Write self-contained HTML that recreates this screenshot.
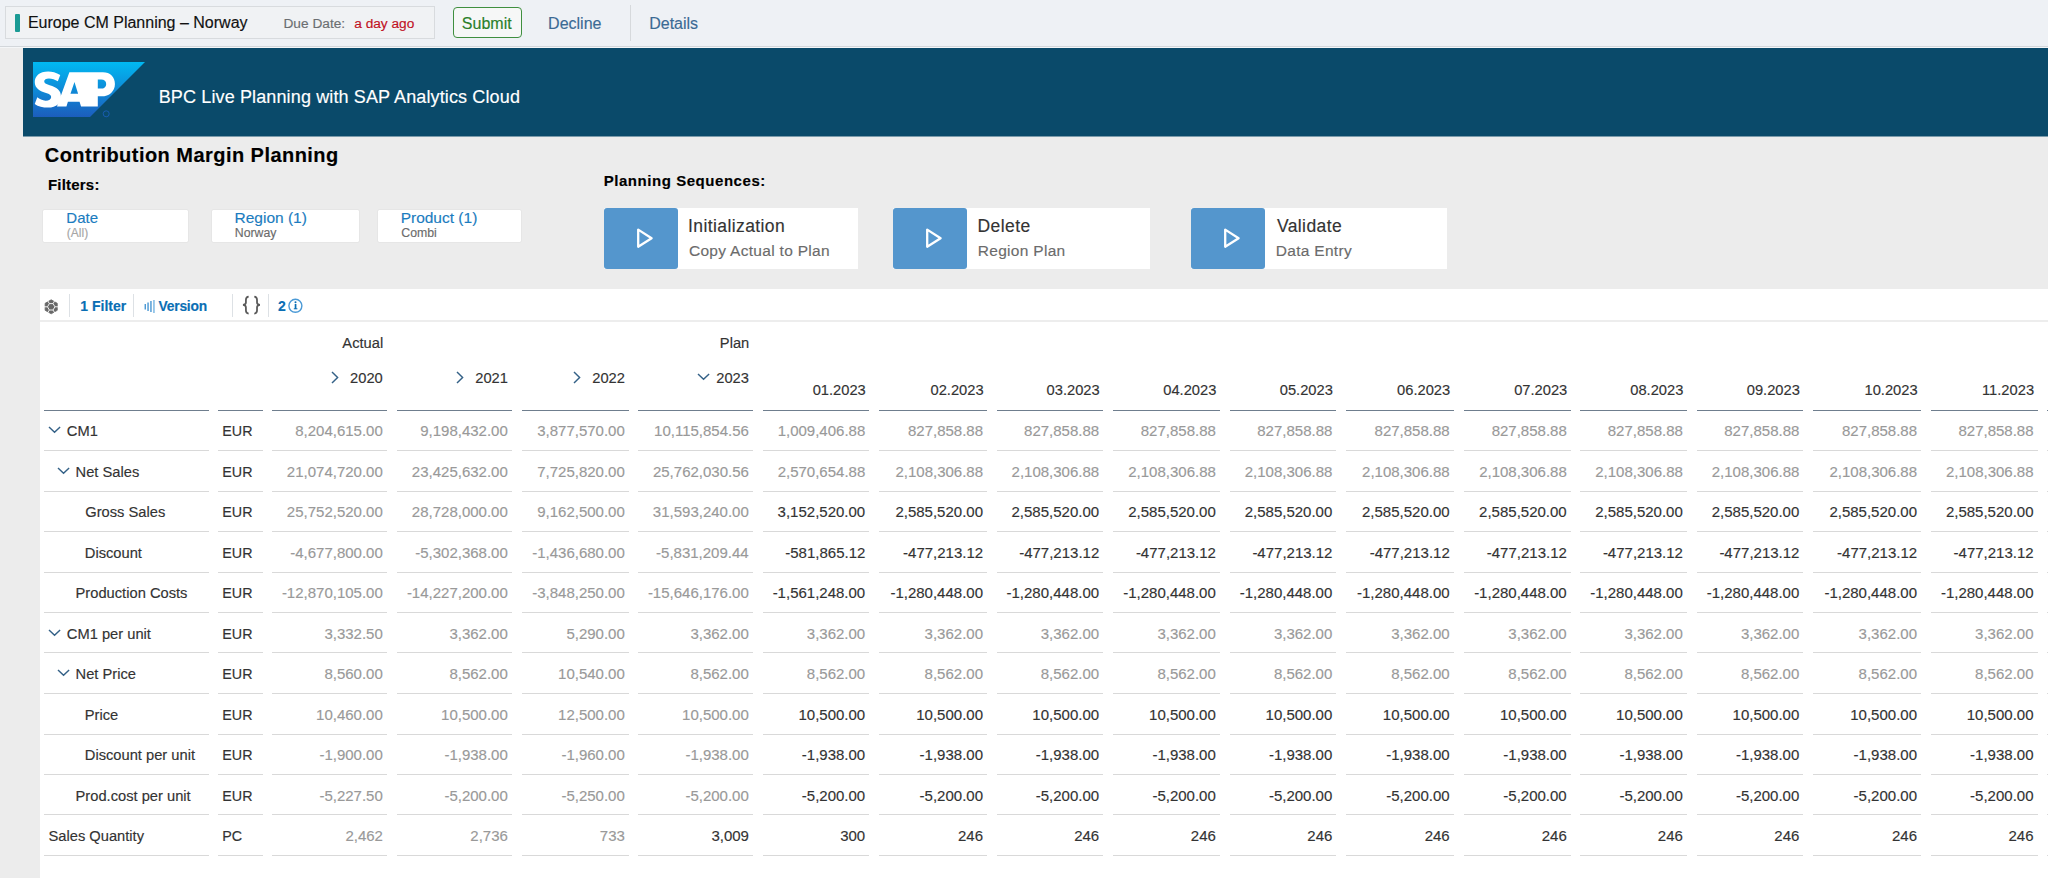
<!DOCTYPE html>
<html><head><meta charset="utf-8"><style>
html,body{margin:0;padding:0;}
body{width:2048px;height:878px;overflow:hidden;position:relative;background:#ececec;font-family:"Liberation Sans", sans-serif;}
.t{position:absolute;white-space:nowrap;line-height:1;-webkit-text-stroke:0.15px currentColor;}
</style></head><body>
<div style="position:absolute;left:0px;top:0px;width:2048px;height:46px;background:#eef1f5"></div>
<div style="position:absolute;left:0px;top:46px;width:2048px;height:1px;background:#d3d7db"></div>
<div style="position:absolute;left:0px;top:47px;width:2048px;height:1px;background:#f4f6f8"></div>
<div style="position:absolute;left:5px;top:6px;width:430px;height:33px;background:#f0f2f4;border:1px solid #d8dbde;box-sizing:border-box"></div>
<div style="position:absolute;left:15px;top:14px;width:4.5px;height:18px;background:#1a9a94;border-radius:1px"></div>
<div class="t" style="left:27.89px;top:15px;font-size:16px;color:#111;">Europe CM Planning – Norway</div>
<div class="t" style="left:283.48px;top:17px;font-size:13.7px;color:#6b6e71;">Due Date:</div>
<div class="t" style="left:354.22px;top:17px;font-size:13.7px;color:#c0111f;">a day ago</div>
<div style="position:absolute;left:453px;top:7px;width:69px;height:30.5px;background:#f6f7f7;border:1px solid #3f8f3f;border-radius:4px;box-sizing:border-box"></div>
<div class="t" style="left:461.87px;top:16px;font-size:16px;color:#2b7f2b;">Submit</div>
<div class="t" style="left:548.09px;top:16px;font-size:16px;color:#3b6a94;">Decline</div>
<div style="position:absolute;left:630px;top:5px;width:1px;height:36px;background:#d6d9dc"></div>
<div class="t" style="left:649.19px;top:16px;font-size:16px;color:#3b6a94;">Details</div>
<svg style="position:absolute;left:0;top:0" width="2048" height="140">
<defs><linearGradient id="g" x1="0" y1="0" x2="0" y2="1"><stop offset="0" stop-color="#00b9f2"/><stop offset="1" stop-color="#1c5dbd"/></linearGradient></defs>
<rect x="23" y="48" width="2025" height="88.5" fill="#0a4a6a"/>
<polygon points="33,62 145,62 90,117 33,117" fill="url(#g)"/>
<g transform="translate(30,58) scale(0.0729)" fill="#fff" fill-rule="evenodd">
<path d="M415,232 C360,200 300,185 250,185 C130,185 65,250 65,330 C65,420 140,455 220,480 C270,495 290,510 290,535 C290,565 260,585 215,585 C170,585 130,565 100,540 L65,630 C110,665 180,680 245,680 C370,680 425,610 425,530 C425,440 365,405 270,375 C215,358 195,345 195,320 C195,295 220,280 260,280 C300,280 345,295 382,318 Z"/>
<path d="M540,195 L1000,195 C1100,195 1165,260 1165,355 C1165,455 1090,525 980,525 L930,525 L930,665 L700,665 L680,600 L520,600 L500,665 L370,665 Z M555,490 L610,330 L660,490 Z M930,295 L975,295 C1020,295 1045,320 1045,355 C1045,395 1015,420 975,420 L930,420 Z"/>
</g>
<circle cx="106.2" cy="113.8" r="3" fill="none" stroke="#1a5fb8" stroke-width="0.9"/>
</svg>
<div class="t" style="left:158.72px;top:88px;font-size:18px;color:#fff;letter-spacing:0.13px;">BPC Live Planning with SAP Analytics Cloud</div>
<div class="t" style="left:44.78px;top:145px;font-size:20px;color:#000;font-weight:bold;letter-spacing:0.46px;">Contribution Margin Planning</div>
<div class="t" style="left:48.00px;top:177px;font-size:15px;color:#000;font-weight:bold;letter-spacing:0.2px;">Filters:</div>
<div style="position:absolute;left:43.4px;top:210px;width:144.29999999999998px;height:32px;background:#fff;box-shadow:0 0 1px rgba(0,0,0,0.25);border-radius:1px"></div>
<div class="t" style="left:66.37px;top:210px;font-size:15px;color:#1b7cc0;">Date</div>
<div class="t" style="left:66.86px;top:227px;font-size:12px;color:#a6a6a6;">(All)</div>
<div style="position:absolute;left:211.6px;top:210px;width:147.4px;height:32px;background:#fff;box-shadow:0 0 1px rgba(0,0,0,0.25);border-radius:1px"></div>
<div class="t" style="left:234.53px;top:210px;font-size:15.5px;color:#1b7cc0;">Region (1)</div>
<div class="t" style="left:234.79px;top:227px;font-size:12.3px;color:#6b6b6b;">Norway</div>
<div style="position:absolute;left:377.7px;top:210px;width:143.40000000000003px;height:32px;background:#fff;box-shadow:0 0 1px rgba(0,0,0,0.25);border-radius:1px"></div>
<div class="t" style="left:400.63px;top:210px;font-size:15.5px;color:#1b7cc0;">Product (1)</div>
<div class="t" style="left:401.28px;top:227px;font-size:12.3px;color:#6b6b6b;">Combi</div>
<div class="t" style="left:603.70px;top:173px;font-size:15px;color:#000;font-weight:bold;letter-spacing:0.55px;">Planning Sequences:</div>
<div style="position:absolute;left:603.7px;top:208px;width:254.29999999999995px;height:60.5px;background:#fff"></div>
<div style="position:absolute;left:603.7px;top:208px;width:74px;height:60.5px;background:#5496cd;border-radius:3px"></div>
<svg style="position:absolute;left:633.7px;top:224.5px" width="26" height="26"><polygon points="4.2,4.6 4.2,21.8 17.6,13.2" fill="none" stroke="#fff" stroke-width="2.3" stroke-linejoin="round"/></svg>
<div class="t" style="left:688.09px;top:218px;font-size:17.5px;color:#333;letter-spacing:0.4px;">Initialization</div>
<div class="t" style="left:688.91px;top:243px;font-size:15.5px;color:#6b6b6b;letter-spacing:0.3px;">Copy Actual to Plan</div>
<div style="position:absolute;left:893px;top:208px;width:257px;height:60.5px;background:#fff"></div>
<div style="position:absolute;left:893px;top:208px;width:74px;height:60.5px;background:#5496cd;border-radius:3px"></div>
<svg style="position:absolute;left:923px;top:224.5px" width="26" height="26"><polygon points="4.2,4.6 4.2,21.8 17.6,13.2" fill="none" stroke="#fff" stroke-width="2.3" stroke-linejoin="round"/></svg>
<div class="t" style="left:977.56px;top:218px;font-size:17.5px;color:#333;letter-spacing:0.4px;">Delete</div>
<div class="t" style="left:977.73px;top:243px;font-size:15.5px;color:#6b6b6b;letter-spacing:0.3px;">Region Plan</div>
<div style="position:absolute;left:1191px;top:208px;width:256px;height:60.5px;background:#fff"></div>
<div style="position:absolute;left:1191px;top:208px;width:74px;height:60.5px;background:#5496cd;border-radius:3px"></div>
<svg style="position:absolute;left:1221px;top:224.5px" width="26" height="26"><polygon points="4.2,4.6 4.2,21.8 17.6,13.2" fill="none" stroke="#fff" stroke-width="2.3" stroke-linejoin="round"/></svg>
<div class="t" style="left:1276.92px;top:218px;font-size:17.5px;color:#333;letter-spacing:0.4px;">Validate</div>
<div class="t" style="left:1275.73px;top:243px;font-size:15.5px;color:#6b6b6b;letter-spacing:0.3px;">Data Entry</div>
<div style="position:absolute;left:40px;top:289px;width:2008px;height:589px;background:#fff"></div>
<div style="position:absolute;left:40px;top:320px;width:2008px;height:1.5px;background:#ededed"></div>
<svg style="position:absolute;left:0;top:0" width="80" height="330">
<polygon points="51.20,299.80 57.26,303.30 57.26,310.30 51.20,313.80 45.14,310.30 45.14,303.30" fill="#686868" stroke="#686868" stroke-width="0.8" stroke-linejoin="round"/>
<g stroke="#fff" stroke-width="0.9" fill="none"><polygon points="54.90,306.80 53.05,310.00 49.35,310.00 47.50,306.80 49.35,303.60 53.05,303.60"/><line x1="54.90" y1="306.80" x2="59.20" y2="306.80"/><line x1="53.05" y1="310.00" x2="55.20" y2="313.73"/><line x1="49.35" y1="310.00" x2="47.20" y2="313.73"/><line x1="47.50" y1="306.80" x2="43.20" y2="306.80"/><line x1="49.35" y1="303.60" x2="47.20" y2="299.87"/><line x1="53.05" y1="303.60" x2="55.20" y2="299.87"/></g>
</svg>
<div style="position:absolute;left:68.5px;top:294px;width:1.2px;height:22.5px;background:#dde1e5"></div>
<div class="t" style="left:80.32px;top:299px;font-size:14px;color:#0a6eb4;font-weight:bold;">1 Filter</div>
<div style="position:absolute;left:133.2px;top:294px;width:1.2px;height:22.5px;background:#dde1e5"></div>
<svg style="position:absolute;left:144px;top:299px" width="12" height="15"><g fill="#3a8fd0">
<rect x="0.6" y="5" width="1.3" height="5.5"/><rect x="3.4" y="3.5" width="1.3" height="8.5"/><rect x="6.3" y="2" width="1.3" height="11"/><rect x="9.3" y="1" width="1.3" height="13" fill="#6aaee0"/></g></svg>
<div class="t" style="left:158.51px;top:300px;font-size:13.8px;color:#0a6eb4;font-weight:bold;letter-spacing:-0.2px;">Version</div>
<div style="position:absolute;left:232px;top:294px;width:1.2px;height:22.5px;background:#dde1e5"></div>
<svg style="position:absolute;left:236px;top:292px" width="30" height="28"><g transform="scale(0.03418)" fill="none" stroke="#5a5a5a" stroke-width="52">
<path d="M370,135 C310,140 290,170 290,230 L290,310 C290,350 260,375 205,380 C260,385 290,410 290,450 L290,540 C290,600 310,625 370,630"/>
<path d="M535,135 C595,140 615,170 615,230 L615,310 C615,350 645,375 700,380 C645,385 615,410 615,450 L615,540 C615,600 595,625 535,630"/>
</g></svg>
<div style="position:absolute;left:268.2px;top:294px;width:1.2px;height:22.5px;background:#dde1e5"></div>
<div class="t" style="left:277.91px;top:299px;font-size:14px;color:#0a6eb4;font-weight:bold;">2</div>
<svg style="position:absolute;left:288px;top:297.5px" width="15" height="15"><circle cx="7.4" cy="7.8" r="6.5" fill="none" stroke="#4b9ad6" stroke-width="1.4"/>
<rect x="6.7" y="6" width="1.7" height="5" fill="#0a6eb4"/><rect x="5.8" y="10.3" width="3.6" height="1" fill="#0a6eb4"/><circle cx="7.5" cy="4.2" r="1" fill="#0a6eb4"/></svg>
<div style="position:absolute;left:44px;top:410px;width:165px;height:1px;background:#6f7e8e"></div>
<div style="position:absolute;left:44px;top:450.0px;width:165px;height:1px;background:#d9d9d9"></div>
<div style="position:absolute;left:44px;top:491.0px;width:165px;height:1px;background:#d9d9d9"></div>
<div style="position:absolute;left:44px;top:531.0px;width:165px;height:1px;background:#d9d9d9"></div>
<div style="position:absolute;left:44px;top:572.0px;width:165px;height:1px;background:#d9d9d9"></div>
<div style="position:absolute;left:44px;top:612.0px;width:165px;height:1px;background:#d9d9d9"></div>
<div style="position:absolute;left:44px;top:652.0px;width:165px;height:1px;background:#d9d9d9"></div>
<div style="position:absolute;left:44px;top:693.0px;width:165px;height:1px;background:#d9d9d9"></div>
<div style="position:absolute;left:44px;top:734.0px;width:165px;height:1px;background:#d9d9d9"></div>
<div style="position:absolute;left:44px;top:773.5px;width:165px;height:1px;background:#d9d9d9"></div>
<div style="position:absolute;left:44px;top:814.0px;width:165px;height:1px;background:#d9d9d9"></div>
<div style="position:absolute;left:44px;top:855.0px;width:165px;height:1px;background:#d9d9d9"></div>
<div style="position:absolute;left:218px;top:410px;width:44.5px;height:1px;background:#6f7e8e"></div>
<div style="position:absolute;left:218px;top:450.0px;width:44.5px;height:1px;background:#d9d9d9"></div>
<div style="position:absolute;left:218px;top:491.0px;width:44.5px;height:1px;background:#d9d9d9"></div>
<div style="position:absolute;left:218px;top:531.0px;width:44.5px;height:1px;background:#d9d9d9"></div>
<div style="position:absolute;left:218px;top:572.0px;width:44.5px;height:1px;background:#d9d9d9"></div>
<div style="position:absolute;left:218px;top:612.0px;width:44.5px;height:1px;background:#d9d9d9"></div>
<div style="position:absolute;left:218px;top:652.0px;width:44.5px;height:1px;background:#d9d9d9"></div>
<div style="position:absolute;left:218px;top:693.0px;width:44.5px;height:1px;background:#d9d9d9"></div>
<div style="position:absolute;left:218px;top:734.0px;width:44.5px;height:1px;background:#d9d9d9"></div>
<div style="position:absolute;left:218px;top:773.5px;width:44.5px;height:1px;background:#d9d9d9"></div>
<div style="position:absolute;left:218px;top:814.0px;width:44.5px;height:1px;background:#d9d9d9"></div>
<div style="position:absolute;left:218px;top:855.0px;width:44.5px;height:1px;background:#d9d9d9"></div>
<div style="position:absolute;left:272px;top:410px;width:115px;height:1px;background:#6f7e8e"></div>
<div style="position:absolute;left:272px;top:450.0px;width:115px;height:1px;background:#d9d9d9"></div>
<div style="position:absolute;left:272px;top:491.0px;width:115px;height:1px;background:#d9d9d9"></div>
<div style="position:absolute;left:272px;top:531.0px;width:115px;height:1px;background:#d9d9d9"></div>
<div style="position:absolute;left:272px;top:572.0px;width:115px;height:1px;background:#d9d9d9"></div>
<div style="position:absolute;left:272px;top:612.0px;width:115px;height:1px;background:#d9d9d9"></div>
<div style="position:absolute;left:272px;top:652.0px;width:115px;height:1px;background:#d9d9d9"></div>
<div style="position:absolute;left:272px;top:693.0px;width:115px;height:1px;background:#d9d9d9"></div>
<div style="position:absolute;left:272px;top:734.0px;width:115px;height:1px;background:#d9d9d9"></div>
<div style="position:absolute;left:272px;top:773.5px;width:115px;height:1px;background:#d9d9d9"></div>
<div style="position:absolute;left:272px;top:814.0px;width:115px;height:1px;background:#d9d9d9"></div>
<div style="position:absolute;left:272px;top:855.0px;width:115px;height:1px;background:#d9d9d9"></div>
<div style="position:absolute;left:397px;top:410px;width:115px;height:1px;background:#6f7e8e"></div>
<div style="position:absolute;left:397px;top:450.0px;width:115px;height:1px;background:#d9d9d9"></div>
<div style="position:absolute;left:397px;top:491.0px;width:115px;height:1px;background:#d9d9d9"></div>
<div style="position:absolute;left:397px;top:531.0px;width:115px;height:1px;background:#d9d9d9"></div>
<div style="position:absolute;left:397px;top:572.0px;width:115px;height:1px;background:#d9d9d9"></div>
<div style="position:absolute;left:397px;top:612.0px;width:115px;height:1px;background:#d9d9d9"></div>
<div style="position:absolute;left:397px;top:652.0px;width:115px;height:1px;background:#d9d9d9"></div>
<div style="position:absolute;left:397px;top:693.0px;width:115px;height:1px;background:#d9d9d9"></div>
<div style="position:absolute;left:397px;top:734.0px;width:115px;height:1px;background:#d9d9d9"></div>
<div style="position:absolute;left:397px;top:773.5px;width:115px;height:1px;background:#d9d9d9"></div>
<div style="position:absolute;left:397px;top:814.0px;width:115px;height:1px;background:#d9d9d9"></div>
<div style="position:absolute;left:397px;top:855.0px;width:115px;height:1px;background:#d9d9d9"></div>
<div style="position:absolute;left:522px;top:410px;width:107px;height:1px;background:#6f7e8e"></div>
<div style="position:absolute;left:522px;top:450.0px;width:107px;height:1px;background:#d9d9d9"></div>
<div style="position:absolute;left:522px;top:491.0px;width:107px;height:1px;background:#d9d9d9"></div>
<div style="position:absolute;left:522px;top:531.0px;width:107px;height:1px;background:#d9d9d9"></div>
<div style="position:absolute;left:522px;top:572.0px;width:107px;height:1px;background:#d9d9d9"></div>
<div style="position:absolute;left:522px;top:612.0px;width:107px;height:1px;background:#d9d9d9"></div>
<div style="position:absolute;left:522px;top:652.0px;width:107px;height:1px;background:#d9d9d9"></div>
<div style="position:absolute;left:522px;top:693.0px;width:107px;height:1px;background:#d9d9d9"></div>
<div style="position:absolute;left:522px;top:734.0px;width:107px;height:1px;background:#d9d9d9"></div>
<div style="position:absolute;left:522px;top:773.5px;width:107px;height:1px;background:#d9d9d9"></div>
<div style="position:absolute;left:522px;top:814.0px;width:107px;height:1px;background:#d9d9d9"></div>
<div style="position:absolute;left:522px;top:855.0px;width:107px;height:1px;background:#d9d9d9"></div>
<div style="position:absolute;left:638px;top:410px;width:115px;height:1px;background:#6f7e8e"></div>
<div style="position:absolute;left:638px;top:450.0px;width:115px;height:1px;background:#d9d9d9"></div>
<div style="position:absolute;left:638px;top:491.0px;width:115px;height:1px;background:#d9d9d9"></div>
<div style="position:absolute;left:638px;top:531.0px;width:115px;height:1px;background:#d9d9d9"></div>
<div style="position:absolute;left:638px;top:572.0px;width:115px;height:1px;background:#d9d9d9"></div>
<div style="position:absolute;left:638px;top:612.0px;width:115px;height:1px;background:#d9d9d9"></div>
<div style="position:absolute;left:638px;top:652.0px;width:115px;height:1px;background:#d9d9d9"></div>
<div style="position:absolute;left:638px;top:693.0px;width:115px;height:1px;background:#d9d9d9"></div>
<div style="position:absolute;left:638px;top:734.0px;width:115px;height:1px;background:#d9d9d9"></div>
<div style="position:absolute;left:638px;top:773.5px;width:115px;height:1px;background:#d9d9d9"></div>
<div style="position:absolute;left:638px;top:814.0px;width:115px;height:1px;background:#d9d9d9"></div>
<div style="position:absolute;left:638px;top:855.0px;width:115px;height:1px;background:#d9d9d9"></div>
<div style="position:absolute;left:763.1px;top:410px;width:106.29999999999995px;height:1px;background:#6f7e8e"></div>
<div style="position:absolute;left:763.1px;top:450.0px;width:106.29999999999995px;height:1px;background:#d9d9d9"></div>
<div style="position:absolute;left:763.1px;top:491.0px;width:106.29999999999995px;height:1px;background:#d9d9d9"></div>
<div style="position:absolute;left:763.1px;top:531.0px;width:106.29999999999995px;height:1px;background:#d9d9d9"></div>
<div style="position:absolute;left:763.1px;top:572.0px;width:106.29999999999995px;height:1px;background:#d9d9d9"></div>
<div style="position:absolute;left:763.1px;top:612.0px;width:106.29999999999995px;height:1px;background:#d9d9d9"></div>
<div style="position:absolute;left:763.1px;top:652.0px;width:106.29999999999995px;height:1px;background:#d9d9d9"></div>
<div style="position:absolute;left:763.1px;top:693.0px;width:106.29999999999995px;height:1px;background:#d9d9d9"></div>
<div style="position:absolute;left:763.1px;top:734.0px;width:106.29999999999995px;height:1px;background:#d9d9d9"></div>
<div style="position:absolute;left:763.1px;top:773.5px;width:106.29999999999995px;height:1px;background:#d9d9d9"></div>
<div style="position:absolute;left:763.1px;top:814.0px;width:106.29999999999995px;height:1px;background:#d9d9d9"></div>
<div style="position:absolute;left:763.1px;top:855.0px;width:106.29999999999995px;height:1px;background:#d9d9d9"></div>
<div style="position:absolute;left:879.2px;top:410px;width:108.0px;height:1px;background:#6f7e8e"></div>
<div style="position:absolute;left:879.2px;top:450.0px;width:108.0px;height:1px;background:#d9d9d9"></div>
<div style="position:absolute;left:879.2px;top:491.0px;width:108.0px;height:1px;background:#d9d9d9"></div>
<div style="position:absolute;left:879.2px;top:531.0px;width:108.0px;height:1px;background:#d9d9d9"></div>
<div style="position:absolute;left:879.2px;top:572.0px;width:108.0px;height:1px;background:#d9d9d9"></div>
<div style="position:absolute;left:879.2px;top:612.0px;width:108.0px;height:1px;background:#d9d9d9"></div>
<div style="position:absolute;left:879.2px;top:652.0px;width:108.0px;height:1px;background:#d9d9d9"></div>
<div style="position:absolute;left:879.2px;top:693.0px;width:108.0px;height:1px;background:#d9d9d9"></div>
<div style="position:absolute;left:879.2px;top:734.0px;width:108.0px;height:1px;background:#d9d9d9"></div>
<div style="position:absolute;left:879.2px;top:773.5px;width:108.0px;height:1px;background:#d9d9d9"></div>
<div style="position:absolute;left:879.2px;top:814.0px;width:108.0px;height:1px;background:#d9d9d9"></div>
<div style="position:absolute;left:879.2px;top:855.0px;width:108.0px;height:1px;background:#d9d9d9"></div>
<div style="position:absolute;left:997px;top:410px;width:106.29999999999995px;height:1px;background:#6f7e8e"></div>
<div style="position:absolute;left:997px;top:450.0px;width:106.29999999999995px;height:1px;background:#d9d9d9"></div>
<div style="position:absolute;left:997px;top:491.0px;width:106.29999999999995px;height:1px;background:#d9d9d9"></div>
<div style="position:absolute;left:997px;top:531.0px;width:106.29999999999995px;height:1px;background:#d9d9d9"></div>
<div style="position:absolute;left:997px;top:572.0px;width:106.29999999999995px;height:1px;background:#d9d9d9"></div>
<div style="position:absolute;left:997px;top:612.0px;width:106.29999999999995px;height:1px;background:#d9d9d9"></div>
<div style="position:absolute;left:997px;top:652.0px;width:106.29999999999995px;height:1px;background:#d9d9d9"></div>
<div style="position:absolute;left:997px;top:693.0px;width:106.29999999999995px;height:1px;background:#d9d9d9"></div>
<div style="position:absolute;left:997px;top:734.0px;width:106.29999999999995px;height:1px;background:#d9d9d9"></div>
<div style="position:absolute;left:997px;top:773.5px;width:106.29999999999995px;height:1px;background:#d9d9d9"></div>
<div style="position:absolute;left:997px;top:814.0px;width:106.29999999999995px;height:1px;background:#d9d9d9"></div>
<div style="position:absolute;left:997px;top:855.0px;width:106.29999999999995px;height:1px;background:#d9d9d9"></div>
<div style="position:absolute;left:1113.1px;top:410px;width:106.90000000000009px;height:1px;background:#6f7e8e"></div>
<div style="position:absolute;left:1113.1px;top:450.0px;width:106.90000000000009px;height:1px;background:#d9d9d9"></div>
<div style="position:absolute;left:1113.1px;top:491.0px;width:106.90000000000009px;height:1px;background:#d9d9d9"></div>
<div style="position:absolute;left:1113.1px;top:531.0px;width:106.90000000000009px;height:1px;background:#d9d9d9"></div>
<div style="position:absolute;left:1113.1px;top:572.0px;width:106.90000000000009px;height:1px;background:#d9d9d9"></div>
<div style="position:absolute;left:1113.1px;top:612.0px;width:106.90000000000009px;height:1px;background:#d9d9d9"></div>
<div style="position:absolute;left:1113.1px;top:652.0px;width:106.90000000000009px;height:1px;background:#d9d9d9"></div>
<div style="position:absolute;left:1113.1px;top:693.0px;width:106.90000000000009px;height:1px;background:#d9d9d9"></div>
<div style="position:absolute;left:1113.1px;top:734.0px;width:106.90000000000009px;height:1px;background:#d9d9d9"></div>
<div style="position:absolute;left:1113.1px;top:773.5px;width:106.90000000000009px;height:1px;background:#d9d9d9"></div>
<div style="position:absolute;left:1113.1px;top:814.0px;width:106.90000000000009px;height:1px;background:#d9d9d9"></div>
<div style="position:absolute;left:1113.1px;top:855.0px;width:106.90000000000009px;height:1px;background:#d9d9d9"></div>
<div style="position:absolute;left:1229.9px;top:410px;width:106.59999999999991px;height:1px;background:#6f7e8e"></div>
<div style="position:absolute;left:1229.9px;top:450.0px;width:106.59999999999991px;height:1px;background:#d9d9d9"></div>
<div style="position:absolute;left:1229.9px;top:491.0px;width:106.59999999999991px;height:1px;background:#d9d9d9"></div>
<div style="position:absolute;left:1229.9px;top:531.0px;width:106.59999999999991px;height:1px;background:#d9d9d9"></div>
<div style="position:absolute;left:1229.9px;top:572.0px;width:106.59999999999991px;height:1px;background:#d9d9d9"></div>
<div style="position:absolute;left:1229.9px;top:612.0px;width:106.59999999999991px;height:1px;background:#d9d9d9"></div>
<div style="position:absolute;left:1229.9px;top:652.0px;width:106.59999999999991px;height:1px;background:#d9d9d9"></div>
<div style="position:absolute;left:1229.9px;top:693.0px;width:106.59999999999991px;height:1px;background:#d9d9d9"></div>
<div style="position:absolute;left:1229.9px;top:734.0px;width:106.59999999999991px;height:1px;background:#d9d9d9"></div>
<div style="position:absolute;left:1229.9px;top:773.5px;width:106.59999999999991px;height:1px;background:#d9d9d9"></div>
<div style="position:absolute;left:1229.9px;top:814.0px;width:106.59999999999991px;height:1px;background:#d9d9d9"></div>
<div style="position:absolute;left:1229.9px;top:855.0px;width:106.59999999999991px;height:1px;background:#d9d9d9"></div>
<div style="position:absolute;left:1346px;top:410px;width:107.79999999999995px;height:1px;background:#6f7e8e"></div>
<div style="position:absolute;left:1346px;top:450.0px;width:107.79999999999995px;height:1px;background:#d9d9d9"></div>
<div style="position:absolute;left:1346px;top:491.0px;width:107.79999999999995px;height:1px;background:#d9d9d9"></div>
<div style="position:absolute;left:1346px;top:531.0px;width:107.79999999999995px;height:1px;background:#d9d9d9"></div>
<div style="position:absolute;left:1346px;top:572.0px;width:107.79999999999995px;height:1px;background:#d9d9d9"></div>
<div style="position:absolute;left:1346px;top:612.0px;width:107.79999999999995px;height:1px;background:#d9d9d9"></div>
<div style="position:absolute;left:1346px;top:652.0px;width:107.79999999999995px;height:1px;background:#d9d9d9"></div>
<div style="position:absolute;left:1346px;top:693.0px;width:107.79999999999995px;height:1px;background:#d9d9d9"></div>
<div style="position:absolute;left:1346px;top:734.0px;width:107.79999999999995px;height:1px;background:#d9d9d9"></div>
<div style="position:absolute;left:1346px;top:773.5px;width:107.79999999999995px;height:1px;background:#d9d9d9"></div>
<div style="position:absolute;left:1346px;top:814.0px;width:107.79999999999995px;height:1px;background:#d9d9d9"></div>
<div style="position:absolute;left:1346px;top:855.0px;width:107.79999999999995px;height:1px;background:#d9d9d9"></div>
<div style="position:absolute;left:1463.9px;top:410px;width:107.0px;height:1px;background:#6f7e8e"></div>
<div style="position:absolute;left:1463.9px;top:450.0px;width:107.0px;height:1px;background:#d9d9d9"></div>
<div style="position:absolute;left:1463.9px;top:491.0px;width:107.0px;height:1px;background:#d9d9d9"></div>
<div style="position:absolute;left:1463.9px;top:531.0px;width:107.0px;height:1px;background:#d9d9d9"></div>
<div style="position:absolute;left:1463.9px;top:572.0px;width:107.0px;height:1px;background:#d9d9d9"></div>
<div style="position:absolute;left:1463.9px;top:612.0px;width:107.0px;height:1px;background:#d9d9d9"></div>
<div style="position:absolute;left:1463.9px;top:652.0px;width:107.0px;height:1px;background:#d9d9d9"></div>
<div style="position:absolute;left:1463.9px;top:693.0px;width:107.0px;height:1px;background:#d9d9d9"></div>
<div style="position:absolute;left:1463.9px;top:734.0px;width:107.0px;height:1px;background:#d9d9d9"></div>
<div style="position:absolute;left:1463.9px;top:773.5px;width:107.0px;height:1px;background:#d9d9d9"></div>
<div style="position:absolute;left:1463.9px;top:814.0px;width:107.0px;height:1px;background:#d9d9d9"></div>
<div style="position:absolute;left:1463.9px;top:855.0px;width:107.0px;height:1px;background:#d9d9d9"></div>
<div style="position:absolute;left:1580.4px;top:410px;width:106.59999999999991px;height:1px;background:#6f7e8e"></div>
<div style="position:absolute;left:1580.4px;top:450.0px;width:106.59999999999991px;height:1px;background:#d9d9d9"></div>
<div style="position:absolute;left:1580.4px;top:491.0px;width:106.59999999999991px;height:1px;background:#d9d9d9"></div>
<div style="position:absolute;left:1580.4px;top:531.0px;width:106.59999999999991px;height:1px;background:#d9d9d9"></div>
<div style="position:absolute;left:1580.4px;top:572.0px;width:106.59999999999991px;height:1px;background:#d9d9d9"></div>
<div style="position:absolute;left:1580.4px;top:612.0px;width:106.59999999999991px;height:1px;background:#d9d9d9"></div>
<div style="position:absolute;left:1580.4px;top:652.0px;width:106.59999999999991px;height:1px;background:#d9d9d9"></div>
<div style="position:absolute;left:1580.4px;top:693.0px;width:106.59999999999991px;height:1px;background:#d9d9d9"></div>
<div style="position:absolute;left:1580.4px;top:734.0px;width:106.59999999999991px;height:1px;background:#d9d9d9"></div>
<div style="position:absolute;left:1580.4px;top:773.5px;width:106.59999999999991px;height:1px;background:#d9d9d9"></div>
<div style="position:absolute;left:1580.4px;top:814.0px;width:106.59999999999991px;height:1px;background:#d9d9d9"></div>
<div style="position:absolute;left:1580.4px;top:855.0px;width:106.59999999999991px;height:1px;background:#d9d9d9"></div>
<div style="position:absolute;left:1696.8px;top:410px;width:106.70000000000005px;height:1px;background:#6f7e8e"></div>
<div style="position:absolute;left:1696.8px;top:450.0px;width:106.70000000000005px;height:1px;background:#d9d9d9"></div>
<div style="position:absolute;left:1696.8px;top:491.0px;width:106.70000000000005px;height:1px;background:#d9d9d9"></div>
<div style="position:absolute;left:1696.8px;top:531.0px;width:106.70000000000005px;height:1px;background:#d9d9d9"></div>
<div style="position:absolute;left:1696.8px;top:572.0px;width:106.70000000000005px;height:1px;background:#d9d9d9"></div>
<div style="position:absolute;left:1696.8px;top:612.0px;width:106.70000000000005px;height:1px;background:#d9d9d9"></div>
<div style="position:absolute;left:1696.8px;top:652.0px;width:106.70000000000005px;height:1px;background:#d9d9d9"></div>
<div style="position:absolute;left:1696.8px;top:693.0px;width:106.70000000000005px;height:1px;background:#d9d9d9"></div>
<div style="position:absolute;left:1696.8px;top:734.0px;width:106.70000000000005px;height:1px;background:#d9d9d9"></div>
<div style="position:absolute;left:1696.8px;top:773.5px;width:106.70000000000005px;height:1px;background:#d9d9d9"></div>
<div style="position:absolute;left:1696.8px;top:814.0px;width:106.70000000000005px;height:1px;background:#d9d9d9"></div>
<div style="position:absolute;left:1696.8px;top:855.0px;width:106.70000000000005px;height:1px;background:#d9d9d9"></div>
<div style="position:absolute;left:1813.3px;top:410px;width:107.90000000000009px;height:1px;background:#6f7e8e"></div>
<div style="position:absolute;left:1813.3px;top:450.0px;width:107.90000000000009px;height:1px;background:#d9d9d9"></div>
<div style="position:absolute;left:1813.3px;top:491.0px;width:107.90000000000009px;height:1px;background:#d9d9d9"></div>
<div style="position:absolute;left:1813.3px;top:531.0px;width:107.90000000000009px;height:1px;background:#d9d9d9"></div>
<div style="position:absolute;left:1813.3px;top:572.0px;width:107.90000000000009px;height:1px;background:#d9d9d9"></div>
<div style="position:absolute;left:1813.3px;top:612.0px;width:107.90000000000009px;height:1px;background:#d9d9d9"></div>
<div style="position:absolute;left:1813.3px;top:652.0px;width:107.90000000000009px;height:1px;background:#d9d9d9"></div>
<div style="position:absolute;left:1813.3px;top:693.0px;width:107.90000000000009px;height:1px;background:#d9d9d9"></div>
<div style="position:absolute;left:1813.3px;top:734.0px;width:107.90000000000009px;height:1px;background:#d9d9d9"></div>
<div style="position:absolute;left:1813.3px;top:773.5px;width:107.90000000000009px;height:1px;background:#d9d9d9"></div>
<div style="position:absolute;left:1813.3px;top:814.0px;width:107.90000000000009px;height:1px;background:#d9d9d9"></div>
<div style="position:absolute;left:1813.3px;top:855.0px;width:107.90000000000009px;height:1px;background:#d9d9d9"></div>
<div style="position:absolute;left:1930.7px;top:410px;width:107.0px;height:1px;background:#6f7e8e"></div>
<div style="position:absolute;left:1930.7px;top:450.0px;width:107.0px;height:1px;background:#d9d9d9"></div>
<div style="position:absolute;left:1930.7px;top:491.0px;width:107.0px;height:1px;background:#d9d9d9"></div>
<div style="position:absolute;left:1930.7px;top:531.0px;width:107.0px;height:1px;background:#d9d9d9"></div>
<div style="position:absolute;left:1930.7px;top:572.0px;width:107.0px;height:1px;background:#d9d9d9"></div>
<div style="position:absolute;left:1930.7px;top:612.0px;width:107.0px;height:1px;background:#d9d9d9"></div>
<div style="position:absolute;left:1930.7px;top:652.0px;width:107.0px;height:1px;background:#d9d9d9"></div>
<div style="position:absolute;left:1930.7px;top:693.0px;width:107.0px;height:1px;background:#d9d9d9"></div>
<div style="position:absolute;left:1930.7px;top:734.0px;width:107.0px;height:1px;background:#d9d9d9"></div>
<div style="position:absolute;left:1930.7px;top:773.5px;width:107.0px;height:1px;background:#d9d9d9"></div>
<div style="position:absolute;left:1930.7px;top:814.0px;width:107.0px;height:1px;background:#d9d9d9"></div>
<div style="position:absolute;left:1930.7px;top:855.0px;width:107.0px;height:1px;background:#d9d9d9"></div>
<div style="position:absolute;left:2047px;top:410px;width:13px;height:1px;background:#6f7e8e"></div>
<div style="position:absolute;left:2047px;top:450.0px;width:13px;height:1px;background:#d9d9d9"></div>
<div style="position:absolute;left:2047px;top:491.0px;width:13px;height:1px;background:#d9d9d9"></div>
<div style="position:absolute;left:2047px;top:531.0px;width:13px;height:1px;background:#d9d9d9"></div>
<div style="position:absolute;left:2047px;top:572.0px;width:13px;height:1px;background:#d9d9d9"></div>
<div style="position:absolute;left:2047px;top:612.0px;width:13px;height:1px;background:#d9d9d9"></div>
<div style="position:absolute;left:2047px;top:652.0px;width:13px;height:1px;background:#d9d9d9"></div>
<div style="position:absolute;left:2047px;top:693.0px;width:13px;height:1px;background:#d9d9d9"></div>
<div style="position:absolute;left:2047px;top:734.0px;width:13px;height:1px;background:#d9d9d9"></div>
<div style="position:absolute;left:2047px;top:773.5px;width:13px;height:1px;background:#d9d9d9"></div>
<div style="position:absolute;left:2047px;top:814.0px;width:13px;height:1px;background:#d9d9d9"></div>
<div style="position:absolute;left:2047px;top:855.0px;width:13px;height:1px;background:#d9d9d9"></div>
<div class="t" style="right:1664.82px;top:336px;font-size:14.7px;color:#333;">Actual</div>
<div class="t" style="right:1298.75px;top:336px;font-size:14.7px;color:#333;">Plan</div>
<div class="t" style="right:1665.23px;top:371px;font-size:14.7px;color:#333;">2020</div>
<svg style="position:absolute;left:331px;top:370.5px" width="9" height="14"><polyline points="1,1 6.6,6.5 1,12" fill="none" stroke="#346187" stroke-width="1.45"/></svg>
<div class="t" style="right:1540.08px;top:371px;font-size:14.7px;color:#333;">2021</div>
<svg style="position:absolute;left:456px;top:370.5px" width="9" height="14"><polyline points="1,1 6.6,6.5 1,12" fill="none" stroke="#346187" stroke-width="1.45"/></svg>
<div class="t" style="right:1423.06px;top:371px;font-size:14.7px;color:#333;">2022</div>
<svg style="position:absolute;left:573px;top:370.5px" width="9" height="14"><polyline points="1,1 6.6,6.5 1,12" fill="none" stroke="#346187" stroke-width="1.45"/></svg>
<div class="t" style="right:1299.05px;top:371px;font-size:14.7px;color:#333;">2023</div>
<svg style="position:absolute;left:696.5px;top:372.5px" width="14" height="9"><polyline points="1,1 6.55,6.3 12.1,1" fill="none" stroke="#346187" stroke-width="1.45"/></svg>
<div class="t" style="right:1182.25px;top:383px;font-size:14.7px;color:#333;">01.2023</div>
<div class="t" style="right:1064.45px;top:383px;font-size:14.7px;color:#333;">02.2023</div>
<div class="t" style="right:948.35px;top:383px;font-size:14.7px;color:#333;">03.2023</div>
<div class="t" style="right:831.65px;top:383px;font-size:14.7px;color:#333;">04.2023</div>
<div class="t" style="right:715.15px;top:383px;font-size:14.7px;color:#333;">05.2023</div>
<div class="t" style="right:597.85px;top:383px;font-size:14.7px;color:#333;">06.2023</div>
<div class="t" style="right:480.75px;top:383px;font-size:14.7px;color:#333;">07.2023</div>
<div class="t" style="right:364.65px;top:383px;font-size:14.7px;color:#333;">08.2023</div>
<div class="t" style="right:248.15px;top:383px;font-size:14.7px;color:#333;">09.2023</div>
<div class="t" style="right:130.45px;top:383px;font-size:14.7px;color:#333;">10.2023</div>
<div class="t" style="right:13.95px;top:383px;font-size:14.7px;color:#333;">11.2023</div>
<svg style="position:absolute;left:48.25px;top:426.05px" width="14" height="9"><polyline points="1,1 6.55,6.3 12.1,1" fill="none" stroke="#346187" stroke-width="1.45"/></svg>
<div class="t" style="left:66.85px;top:424px;font-size:14.7px;color:#333;">CM1</div>
<div class="t" style="left:222.33px;top:424px;font-size:14.3px;color:#333;">EUR</div>
<div class="t" style="right:1665.21px;top:423px;font-size:15px;color:#999;">8,204,615.00</div>
<div class="t" style="right:1540.21px;top:423px;font-size:15px;color:#999;">9,198,432.00</div>
<div class="t" style="right:1423.21px;top:423px;font-size:15px;color:#999;">3,877,570.00</div>
<div class="t" style="right:1299.14px;top:423px;font-size:15px;color:#999;">10,115,854.56</div>
<div class="t" style="right:1182.75px;top:423px;font-size:15px;color:#999;">1,009,406.88</div>
<div class="t" style="right:1064.95px;top:423px;font-size:15px;color:#999;">827,858.88</div>
<div class="t" style="right:948.85px;top:423px;font-size:15px;color:#999;">827,858.88</div>
<div class="t" style="right:832.15px;top:423px;font-size:15px;color:#999;">827,858.88</div>
<div class="t" style="right:715.65px;top:423px;font-size:15px;color:#999;">827,858.88</div>
<div class="t" style="right:598.35px;top:423px;font-size:15px;color:#999;">827,858.88</div>
<div class="t" style="right:481.25px;top:423px;font-size:15px;color:#999;">827,858.88</div>
<div class="t" style="right:365.15px;top:423px;font-size:15px;color:#999;">827,858.88</div>
<div class="t" style="right:248.65px;top:423px;font-size:15px;color:#999;">827,858.88</div>
<div class="t" style="right:130.95px;top:423px;font-size:15px;color:#999;">827,858.88</div>
<div class="t" style="right:14.45px;top:423px;font-size:15px;color:#999;">827,858.88</div>
<svg style="position:absolute;left:57.35px;top:466.55px" width="14" height="9"><polyline points="1,1 6.55,6.3 12.1,1" fill="none" stroke="#346187" stroke-width="1.45"/></svg>
<div class="t" style="left:75.59px;top:465px;font-size:14.7px;color:#333;">Net Sales</div>
<div class="t" style="left:222.33px;top:465px;font-size:14.3px;color:#333;">EUR</div>
<div class="t" style="right:1665.21px;top:464px;font-size:15px;color:#999;">21,074,720.00</div>
<div class="t" style="right:1540.21px;top:464px;font-size:15px;color:#999;">23,425,632.00</div>
<div class="t" style="right:1423.21px;top:464px;font-size:15px;color:#999;">7,725,820.00</div>
<div class="t" style="right:1299.14px;top:464px;font-size:15px;color:#999;">25,762,030.56</div>
<div class="t" style="right:1182.75px;top:464px;font-size:15px;color:#999;">2,570,654.88</div>
<div class="t" style="right:1064.95px;top:464px;font-size:15px;color:#999;">2,108,306.88</div>
<div class="t" style="right:948.85px;top:464px;font-size:15px;color:#999;">2,108,306.88</div>
<div class="t" style="right:832.15px;top:464px;font-size:15px;color:#999;">2,108,306.88</div>
<div class="t" style="right:715.65px;top:464px;font-size:15px;color:#999;">2,108,306.88</div>
<div class="t" style="right:598.35px;top:464px;font-size:15px;color:#999;">2,108,306.88</div>
<div class="t" style="right:481.25px;top:464px;font-size:15px;color:#999;">2,108,306.88</div>
<div class="t" style="right:365.15px;top:464px;font-size:15px;color:#999;">2,108,306.88</div>
<div class="t" style="right:248.65px;top:464px;font-size:15px;color:#999;">2,108,306.88</div>
<div class="t" style="right:130.95px;top:464px;font-size:15px;color:#999;">2,108,306.88</div>
<div class="t" style="right:14.45px;top:464px;font-size:15px;color:#999;">2,108,306.88</div>
<div class="t" style="left:85.26px;top:505px;font-size:14.7px;color:#333;">Gross Sales</div>
<div class="t" style="left:222.33px;top:505px;font-size:14.3px;color:#333;">EUR</div>
<div class="t" style="right:1665.21px;top:504px;font-size:15px;color:#999;">25,752,520.00</div>
<div class="t" style="right:1540.21px;top:504px;font-size:15px;color:#999;">28,728,000.00</div>
<div class="t" style="right:1423.21px;top:504px;font-size:15px;color:#999;">9,162,500.00</div>
<div class="t" style="right:1299.21px;top:504px;font-size:15px;color:#999;">31,593,240.00</div>
<div class="t" style="right:1182.81px;top:504px;font-size:15px;color:#333;">3,152,520.00</div>
<div class="t" style="right:1065.01px;top:504px;font-size:15px;color:#333;">2,585,520.00</div>
<div class="t" style="right:948.91px;top:504px;font-size:15px;color:#333;">2,585,520.00</div>
<div class="t" style="right:832.21px;top:504px;font-size:15px;color:#333;">2,585,520.00</div>
<div class="t" style="right:715.71px;top:504px;font-size:15px;color:#333;">2,585,520.00</div>
<div class="t" style="right:598.41px;top:504px;font-size:15px;color:#333;">2,585,520.00</div>
<div class="t" style="right:481.31px;top:504px;font-size:15px;color:#333;">2,585,520.00</div>
<div class="t" style="right:365.21px;top:504px;font-size:15px;color:#333;">2,585,520.00</div>
<div class="t" style="right:248.71px;top:504px;font-size:15px;color:#333;">2,585,520.00</div>
<div class="t" style="right:131.01px;top:504px;font-size:15px;color:#333;">2,585,520.00</div>
<div class="t" style="right:14.51px;top:504px;font-size:15px;color:#333;">2,585,520.00</div>
<div class="t" style="left:84.79px;top:546px;font-size:14.7px;color:#333;">Discount</div>
<div class="t" style="left:222.33px;top:546px;font-size:14.3px;color:#333;">EUR</div>
<div class="t" style="right:1665.21px;top:545px;font-size:15px;color:#999;">-4,677,800.00</div>
<div class="t" style="right:1540.21px;top:545px;font-size:15px;color:#999;">-5,302,368.00</div>
<div class="t" style="right:1423.21px;top:545px;font-size:15px;color:#999;">-1,436,680.00</div>
<div class="t" style="right:1299.36px;top:545px;font-size:15px;color:#999;">-5,831,209.44</div>
<div class="t" style="right:1182.65px;top:545px;font-size:15px;color:#333;">-581,865.12</div>
<div class="t" style="right:1064.85px;top:545px;font-size:15px;color:#333;">-477,213.12</div>
<div class="t" style="right:948.75px;top:545px;font-size:15px;color:#333;">-477,213.12</div>
<div class="t" style="right:832.05px;top:545px;font-size:15px;color:#333;">-477,213.12</div>
<div class="t" style="right:715.55px;top:545px;font-size:15px;color:#333;">-477,213.12</div>
<div class="t" style="right:598.25px;top:545px;font-size:15px;color:#333;">-477,213.12</div>
<div class="t" style="right:481.15px;top:545px;font-size:15px;color:#333;">-477,213.12</div>
<div class="t" style="right:365.05px;top:545px;font-size:15px;color:#333;">-477,213.12</div>
<div class="t" style="right:248.55px;top:545px;font-size:15px;color:#333;">-477,213.12</div>
<div class="t" style="right:130.85px;top:545px;font-size:15px;color:#333;">-477,213.12</div>
<div class="t" style="right:14.35px;top:545px;font-size:15px;color:#333;">-477,213.12</div>
<div class="t" style="left:75.59px;top:586px;font-size:14.7px;color:#333;">Production Costs</div>
<div class="t" style="left:222.33px;top:586px;font-size:14.3px;color:#333;">EUR</div>
<div class="t" style="right:1665.21px;top:585px;font-size:15px;color:#999;">-12,870,105.00</div>
<div class="t" style="right:1540.21px;top:585px;font-size:15px;color:#999;">-14,227,200.00</div>
<div class="t" style="right:1423.21px;top:585px;font-size:15px;color:#999;">-3,848,250.00</div>
<div class="t" style="right:1299.21px;top:585px;font-size:15px;color:#999;">-15,646,176.00</div>
<div class="t" style="right:1182.81px;top:585px;font-size:15px;color:#333;">-1,561,248.00</div>
<div class="t" style="right:1065.01px;top:585px;font-size:15px;color:#333;">-1,280,448.00</div>
<div class="t" style="right:948.91px;top:585px;font-size:15px;color:#333;">-1,280,448.00</div>
<div class="t" style="right:832.21px;top:585px;font-size:15px;color:#333;">-1,280,448.00</div>
<div class="t" style="right:715.71px;top:585px;font-size:15px;color:#333;">-1,280,448.00</div>
<div class="t" style="right:598.41px;top:585px;font-size:15px;color:#333;">-1,280,448.00</div>
<div class="t" style="right:481.31px;top:585px;font-size:15px;color:#333;">-1,280,448.00</div>
<div class="t" style="right:365.21px;top:585px;font-size:15px;color:#333;">-1,280,448.00</div>
<div class="t" style="right:248.71px;top:585px;font-size:15px;color:#333;">-1,280,448.00</div>
<div class="t" style="right:131.01px;top:585px;font-size:15px;color:#333;">-1,280,448.00</div>
<div class="t" style="right:14.51px;top:585px;font-size:15px;color:#333;">-1,280,448.00</div>
<svg style="position:absolute;left:48.25px;top:628.55px" width="14" height="9"><polyline points="1,1 6.55,6.3 12.1,1" fill="none" stroke="#346187" stroke-width="1.45"/></svg>
<div class="t" style="left:66.85px;top:627px;font-size:14.7px;color:#333;">CM1 per unit</div>
<div class="t" style="left:222.33px;top:627px;font-size:14.3px;color:#333;">EUR</div>
<div class="t" style="right:1665.21px;top:626px;font-size:15px;color:#999;">3,332.50</div>
<div class="t" style="right:1540.21px;top:626px;font-size:15px;color:#999;">3,362.00</div>
<div class="t" style="right:1423.21px;top:626px;font-size:15px;color:#999;">5,290.00</div>
<div class="t" style="right:1299.21px;top:626px;font-size:15px;color:#999;">3,362.00</div>
<div class="t" style="right:1182.81px;top:626px;font-size:15px;color:#999;">3,362.00</div>
<div class="t" style="right:1065.01px;top:626px;font-size:15px;color:#999;">3,362.00</div>
<div class="t" style="right:948.91px;top:626px;font-size:15px;color:#999;">3,362.00</div>
<div class="t" style="right:832.21px;top:626px;font-size:15px;color:#999;">3,362.00</div>
<div class="t" style="right:715.71px;top:626px;font-size:15px;color:#999;">3,362.00</div>
<div class="t" style="right:598.41px;top:626px;font-size:15px;color:#999;">3,362.00</div>
<div class="t" style="right:481.31px;top:626px;font-size:15px;color:#999;">3,362.00</div>
<div class="t" style="right:365.21px;top:626px;font-size:15px;color:#999;">3,362.00</div>
<div class="t" style="right:248.71px;top:626px;font-size:15px;color:#999;">3,362.00</div>
<div class="t" style="right:131.01px;top:626px;font-size:15px;color:#999;">3,362.00</div>
<div class="t" style="right:14.51px;top:626px;font-size:15px;color:#999;">3,362.00</div>
<svg style="position:absolute;left:57.35px;top:669.05px" width="14" height="9"><polyline points="1,1 6.55,6.3 12.1,1" fill="none" stroke="#346187" stroke-width="1.45"/></svg>
<div class="t" style="left:75.59px;top:667px;font-size:14.7px;color:#333;">Net Price</div>
<div class="t" style="left:222.33px;top:667px;font-size:14.3px;color:#333;">EUR</div>
<div class="t" style="right:1665.21px;top:666px;font-size:15px;color:#999;">8,560.00</div>
<div class="t" style="right:1540.21px;top:666px;font-size:15px;color:#999;">8,562.00</div>
<div class="t" style="right:1423.21px;top:666px;font-size:15px;color:#999;">10,540.00</div>
<div class="t" style="right:1299.21px;top:666px;font-size:15px;color:#999;">8,562.00</div>
<div class="t" style="right:1182.81px;top:666px;font-size:15px;color:#999;">8,562.00</div>
<div class="t" style="right:1065.01px;top:666px;font-size:15px;color:#999;">8,562.00</div>
<div class="t" style="right:948.91px;top:666px;font-size:15px;color:#999;">8,562.00</div>
<div class="t" style="right:832.21px;top:666px;font-size:15px;color:#999;">8,562.00</div>
<div class="t" style="right:715.71px;top:666px;font-size:15px;color:#999;">8,562.00</div>
<div class="t" style="right:598.41px;top:666px;font-size:15px;color:#999;">8,562.00</div>
<div class="t" style="right:481.31px;top:666px;font-size:15px;color:#999;">8,562.00</div>
<div class="t" style="right:365.21px;top:666px;font-size:15px;color:#999;">8,562.00</div>
<div class="t" style="right:248.71px;top:666px;font-size:15px;color:#999;">8,562.00</div>
<div class="t" style="right:131.01px;top:666px;font-size:15px;color:#999;">8,562.00</div>
<div class="t" style="right:14.51px;top:666px;font-size:15px;color:#999;">8,562.00</div>
<div class="t" style="left:84.79px;top:708px;font-size:14.7px;color:#333;">Price</div>
<div class="t" style="left:222.33px;top:708px;font-size:14.3px;color:#333;">EUR</div>
<div class="t" style="right:1665.21px;top:707px;font-size:15px;color:#999;">10,460.00</div>
<div class="t" style="right:1540.21px;top:707px;font-size:15px;color:#999;">10,500.00</div>
<div class="t" style="right:1423.21px;top:707px;font-size:15px;color:#999;">12,500.00</div>
<div class="t" style="right:1299.21px;top:707px;font-size:15px;color:#999;">10,500.00</div>
<div class="t" style="right:1182.81px;top:707px;font-size:15px;color:#333;">10,500.00</div>
<div class="t" style="right:1065.01px;top:707px;font-size:15px;color:#333;">10,500.00</div>
<div class="t" style="right:948.91px;top:707px;font-size:15px;color:#333;">10,500.00</div>
<div class="t" style="right:832.21px;top:707px;font-size:15px;color:#333;">10,500.00</div>
<div class="t" style="right:715.71px;top:707px;font-size:15px;color:#333;">10,500.00</div>
<div class="t" style="right:598.41px;top:707px;font-size:15px;color:#333;">10,500.00</div>
<div class="t" style="right:481.31px;top:707px;font-size:15px;color:#333;">10,500.00</div>
<div class="t" style="right:365.21px;top:707px;font-size:15px;color:#333;">10,500.00</div>
<div class="t" style="right:248.71px;top:707px;font-size:15px;color:#333;">10,500.00</div>
<div class="t" style="right:131.01px;top:707px;font-size:15px;color:#333;">10,500.00</div>
<div class="t" style="right:14.51px;top:707px;font-size:15px;color:#333;">10,500.00</div>
<div class="t" style="left:84.79px;top:748px;font-size:14.7px;color:#333;">Discount per unit</div>
<div class="t" style="left:222.33px;top:748px;font-size:14.3px;color:#333;">EUR</div>
<div class="t" style="right:1665.21px;top:747px;font-size:15px;color:#999;">-1,900.00</div>
<div class="t" style="right:1540.21px;top:747px;font-size:15px;color:#999;">-1,938.00</div>
<div class="t" style="right:1423.21px;top:747px;font-size:15px;color:#999;">-1,960.00</div>
<div class="t" style="right:1299.21px;top:747px;font-size:15px;color:#999;">-1,938.00</div>
<div class="t" style="right:1182.81px;top:747px;font-size:15px;color:#333;">-1,938.00</div>
<div class="t" style="right:1065.01px;top:747px;font-size:15px;color:#333;">-1,938.00</div>
<div class="t" style="right:948.91px;top:747px;font-size:15px;color:#333;">-1,938.00</div>
<div class="t" style="right:832.21px;top:747px;font-size:15px;color:#333;">-1,938.00</div>
<div class="t" style="right:715.71px;top:747px;font-size:15px;color:#333;">-1,938.00</div>
<div class="t" style="right:598.41px;top:747px;font-size:15px;color:#333;">-1,938.00</div>
<div class="t" style="right:481.31px;top:747px;font-size:15px;color:#333;">-1,938.00</div>
<div class="t" style="right:365.21px;top:747px;font-size:15px;color:#333;">-1,938.00</div>
<div class="t" style="right:248.71px;top:747px;font-size:15px;color:#333;">-1,938.00</div>
<div class="t" style="right:131.01px;top:747px;font-size:15px;color:#333;">-1,938.00</div>
<div class="t" style="right:14.51px;top:747px;font-size:15px;color:#333;">-1,938.00</div>
<div class="t" style="left:75.59px;top:789px;font-size:14.7px;color:#333;">Prod.cost per unit</div>
<div class="t" style="left:222.33px;top:789px;font-size:14.3px;color:#333;">EUR</div>
<div class="t" style="right:1665.21px;top:788px;font-size:15px;color:#999;">-5,227.50</div>
<div class="t" style="right:1540.21px;top:788px;font-size:15px;color:#999;">-5,200.00</div>
<div class="t" style="right:1423.21px;top:788px;font-size:15px;color:#999;">-5,250.00</div>
<div class="t" style="right:1299.21px;top:788px;font-size:15px;color:#999;">-5,200.00</div>
<div class="t" style="right:1182.81px;top:788px;font-size:15px;color:#333;">-5,200.00</div>
<div class="t" style="right:1065.01px;top:788px;font-size:15px;color:#333;">-5,200.00</div>
<div class="t" style="right:948.91px;top:788px;font-size:15px;color:#333;">-5,200.00</div>
<div class="t" style="right:832.21px;top:788px;font-size:15px;color:#333;">-5,200.00</div>
<div class="t" style="right:715.71px;top:788px;font-size:15px;color:#333;">-5,200.00</div>
<div class="t" style="right:598.41px;top:788px;font-size:15px;color:#333;">-5,200.00</div>
<div class="t" style="right:481.31px;top:788px;font-size:15px;color:#333;">-5,200.00</div>
<div class="t" style="right:365.21px;top:788px;font-size:15px;color:#333;">-5,200.00</div>
<div class="t" style="right:248.71px;top:788px;font-size:15px;color:#333;">-5,200.00</div>
<div class="t" style="right:131.01px;top:788px;font-size:15px;color:#333;">-5,200.00</div>
<div class="t" style="right:14.51px;top:788px;font-size:15px;color:#333;">-5,200.00</div>
<div class="t" style="left:48.53px;top:829px;font-size:14.7px;color:#333;">Sales Quantity</div>
<div class="t" style="left:222.33px;top:829px;font-size:14.3px;color:#333;">PC</div>
<div class="t" style="right:1665.05px;top:828px;font-size:15px;color:#999;">2,462</div>
<div class="t" style="right:1540.14px;top:828px;font-size:15px;color:#999;">2,736</div>
<div class="t" style="right:1423.14px;top:828px;font-size:15px;color:#999;">733</div>
<div class="t" style="right:1299.09px;top:828px;font-size:15px;color:#333;">3,009</div>
<div class="t" style="right:1182.81px;top:828px;font-size:15px;color:#333;">300</div>
<div class="t" style="right:1064.94px;top:828px;font-size:15px;color:#333;">246</div>
<div class="t" style="right:948.84px;top:828px;font-size:15px;color:#333;">246</div>
<div class="t" style="right:832.14px;top:828px;font-size:15px;color:#333;">246</div>
<div class="t" style="right:715.64px;top:828px;font-size:15px;color:#333;">246</div>
<div class="t" style="right:598.34px;top:828px;font-size:15px;color:#333;">246</div>
<div class="t" style="right:481.24px;top:828px;font-size:15px;color:#333;">246</div>
<div class="t" style="right:365.14px;top:828px;font-size:15px;color:#333;">246</div>
<div class="t" style="right:248.64px;top:828px;font-size:15px;color:#333;">246</div>
<div class="t" style="right:130.94px;top:828px;font-size:15px;color:#333;">246</div>
<div class="t" style="right:14.44px;top:828px;font-size:15px;color:#333;">246</div>
</body></html>
